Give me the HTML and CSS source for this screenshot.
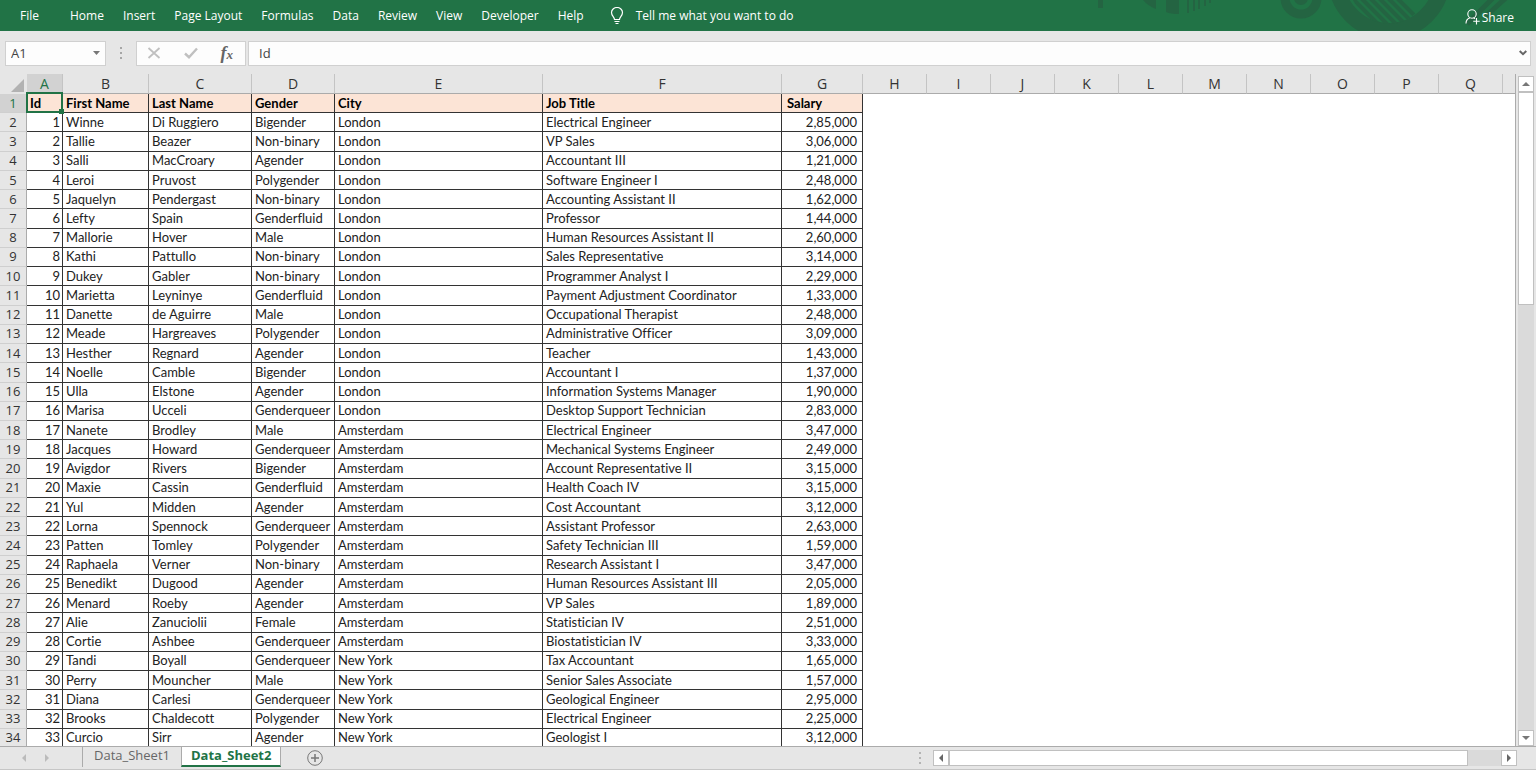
FILE: index.html
```html
<!DOCTYPE html>
<html lang="en">
<head>
    <meta charset="UTF-8">
    <meta name="viewport" content="width=device-width, initial-scale=1.0">
    <title>Data_Sheet2</title>
    <link rel="stylesheet" href="styles.css">
</head>
<body>
    <!-- Ribbon -->
    <header class="ribbon">
        <svg class="ribbon-art" width="438" height="31" viewBox="1098 0 438 31" aria-hidden="true">
            <defs>
                <clipPath id="disc"><circle cx="1389" cy="-15" r="39"/></clipPath>
            </defs>
            <g fill="#246442">
                <rect x="1098" width="5" height="8"/>
                <path d="M1143 0h13v9q-8-3-13-9zM1166 0h13v14q-8 0-13-2z"/>
                <path d="M1187 0h2v13h-2zM1193 0h2v11h-2zM1198 0h2v9h-2zM1204 0h2v6h-2zM1209 0h2v3h-2z"/>
                <circle cx="1301" cy="-2" r="7"/>
            </g>
            <g fill="none" stroke="#246442">
                <circle cx="1301" cy="-2" r="16" stroke-width="9"/>
                <circle cx="1389" cy="-22" r="53" stroke-width="16"/>
                <path clip-path="url(#disc)" stroke-width="4" d="M1334-20l60 60M1343-20l60 60M1352-20l60 60M1361-20l60 60M1370-20l60 60M1379-20l60 60"/>
                <path stroke-width="5" d="M1495-4l-28 28M1508-4l-22 20"/>
            </g>
        </svg>
        <nav class="menu">
            <a href="#" class="file">File</a>
            <a href="#">Home</a>
            <a href="#">Insert</a>
            <a href="#">Page Layout</a>
            <a href="#">Formulas</a>
            <a href="#">Data</a>
            <a href="#">Review</a>
            <a href="#">View</a>
            <a href="#">Developer</a>
            <a href="#">Help</a>
        </nav>
        <button class="tell-me">
            <svg width="14" height="18" viewBox="0 0 14 18" fill="none" stroke="#fff" stroke-width="1.2">
                <path d="M4.5 12.5c0-2.5-3-3.5-3-7a5.5 5 0 0 1 11 0c0 3.5-3 4.500-3 7z"/>
                <path d="M4.5 14.5h5M5.5 16.5h3"/>
            </svg>
            Tell me what you want to do
        </button>
        <button class="share">
            <svg width="15" height="16" viewBox="0 0 15 16" fill="none" stroke="#fff" stroke-width="1.1">
                <circle cx="7" cy="5" r="4.2"/>
                <path d="M1 14.5c0-3 1.5-5 4-5.8M8.5 8.8l1.5 1M11.5 9v6.500M8.2 12.200h6.500"/>
            </svg>
            Share
        </button>
    </header>

    <!-- Formula bar -->
    <div class="formula-bar">
        <div class="name-box">
            <input type="text" value="A1" aria-label="Name box">
            <button aria-label="Show names">
                <svg width="7" height="4" viewBox="0 0 7 4"><path d="M0 0h7L3.5 4z" fill="#777"/></svg>
            </button>
        </div>
        <svg class="dots" width="3" height="12" viewBox="0 0 3 12" fill="#a6a6a6"><path d="M0 0h2v2H0zM0 5h2v2H0zM0 10h2v2H0z"/></svg>
        <div class="formula-buttons">
            <button aria-label="Cancel">
                <svg width="14" height="12" viewBox="0 0 14 12" stroke="#c0c0c0" stroke-width="1.8"><path d="M1.5 1l11 10M12.5 1l-11 10"/></svg>
            </button>
            <button aria-label="Enter">
                <svg width="14" height="12" viewBox="0 0 14 12" fill="none" stroke="#c0c0c0" stroke-width="2.4"><path d="M1 6.5l4 3.7L13 1.5"/></svg>
            </button>
            <button class="fx" aria-label="Insert function"><i>f</i><i class="x">x</i></button>
        </div>
        <div class="formula">
            <input type="text" value="Id" aria-label="Formula">
            <button aria-label="Expand formula bar">
                <svg width="8" height="6" viewBox="0 0 8 6" fill="none" stroke="#666" stroke-width="2"><path d="M.7 1L4 4.2 7.3 1"/></svg>
            </button>
        </div>
    </div>

    <!-- Worksheet -->
    <main class="workspace">
        <div class="sheet">
            <table>
                <colgroup>
                    <col class="c-num"><col class="c-a"><col class="c-b"><col class="c-c"><col class="c-d"><col class="c-e"><col class="c-f"><col class="c-g">
                    <col class="c-std" span="10"><col>
                </colgroup>
                <thead>
                    <tr id="letters"></tr>
                </thead>
                <tbody id="rows"></tbody>
            </table>
        </div>
        <div class="scroll-v">
            <button aria-label="Scroll up"><svg width="8" height="4" viewBox="0 0 8 4"><path d="M0 4h8L4 0z" fill="#777"/></svg></button>
            <div class="track"><div class="thumb"></div></div>
            <button aria-label="Scroll down"><svg width="8" height="4" viewBox="0 0 8 4"><path d="M0 0h8L4 4z" fill="#777"/></svg></button>
        </div>
    </main>

    <!-- Sheet tabs -->
    <footer class="bottom">
        <div class="tab-arrows">
            <button aria-label="Previous sheet"><svg width="4" height="8" viewBox="0 0 4 8"><path d="M4 0v8L0 4z" fill="#bbb"/></svg></button>
            <button aria-label="Next sheet"><svg width="4" height="8" viewBox="0 0 4 8"><path d="M0 0v8l4-4z" fill="#bbb"/></svg></button>
        </div>
        <button class="tab">Data_Sheet1</button>
        <button class="tab active">Data_Sheet2</button>
        <button class="add-sheet" aria-label="New sheet">
            <svg width="16" height="16" viewBox="0 0 16 16" fill="none" stroke="#777"><circle cx="8" cy="8" r="7.3"/><path stroke-width="1.5" d="M8 4v8M4 8h8"/></svg>
        </button>
        <svg class="dots" width="3" height="12" viewBox="0 0 3 12" fill="#b4b4b4"><path d="M0 0h2v2H0zM0 5h2v2H0zM0 10h2v2H0z"/></svg>
        <div class="scroll-h">
            <button aria-label="Scroll left"><svg width="4" height="8" viewBox="0 0 4 8"><path d="M4 0v8L0 4z" fill="#666"/></svg></button>
            <div class="track"><div class="thumb"></div></div>
            <button aria-label="Scroll right"><svg width="4" height="8" viewBox="0 0 4 8"><path d="M0 0v8l4-4z" fill="#666"/></svg></button>
        </div>
    </footer>

    <script>
        const headings = ['Id', 'First Name', 'Last Name', 'Gender', 'City', 'Job Title', 'Salary'];
        const people = [
            ['Winne', 'Di Ruggiero', 'Bigender', 'London', 'Electrical Engineer', '2,85,000'],
            ['Tallie', 'Beazer', 'Non-binary', 'London', 'VP Sales', '3,06,000'],
            ['Salli', 'MacCroary', 'Agender', 'London', 'Accountant III', '1,21,000'],
            ['Leroi', 'Pruvost', 'Polygender', 'London', 'Software Engineer I', '2,48,000'],
            ['Jaquelyn', 'Pendergast', 'Non-binary', 'London', 'Accounting Assistant II', '1,62,000'],
            ['Lefty', 'Spain', 'Genderfluid', 'London', 'Professor', '1,44,000'],
            ['Mallorie', 'Hover', 'Male', 'London', 'Human Resources Assistant II', '2,60,000'],
            ['Kathi', 'Pattullo', 'Non-binary', 'London', 'Sales Representative', '3,14,000'],
            ['Dukey', 'Gabler', 'Non-binary', 'London', 'Programmer Analyst I', '2,29,000'],
            ['Marietta', 'Leyninye', 'Genderfluid', 'London', 'Payment Adjustment Coordinator', '1,33,000'],
            ['Danette', 'de Aguirre', 'Male', 'London', 'Occupational Therapist', '2,48,000'],
            ['Meade', 'Hargreaves', 'Polygender', 'London', 'Administrative Officer', '3,09,000'],
            ['Hesther', 'Regnard', 'Agender', 'London', 'Teacher', '1,43,000'],
            ['Noelle', 'Camble', 'Bigender', 'London', 'Accountant I', '1,37,000'],
            ['Ulla', 'Elstone', 'Agender', 'London', 'Information Systems Manager', '1,90,000'],
            ['Marisa', 'Ucceli', 'Genderqueer', 'London', 'Desktop Support Technician', '2,83,000'],
            ['Nanete', 'Brodley', 'Male', 'Amsterdam', 'Electrical Engineer', '3,47,000'],
            ['Jacques', 'Howard', 'Genderqueer', 'Amsterdam', 'Mechanical Systems Engineer', '2,49,000'],
            ['Avigdor', 'Rivers', 'Bigender', 'Amsterdam', 'Account Representative II', '3,15,000'],
            ['Maxie', 'Cassin', 'Genderfluid', 'Amsterdam', 'Health Coach IV', '3,15,000'],
            ['Yul', 'Midden', 'Agender', 'Amsterdam', 'Cost Accountant', '3,12,000'],
            ['Lorna', 'Spennock', 'Genderqueer', 'Amsterdam', 'Assistant Professor', '2,63,000'],
            ['Patten', 'Tomley', 'Polygender', 'Amsterdam', 'Safety Technician III', '1,59,000'],
            ['Raphaela', 'Verner', 'Non-binary', 'Amsterdam', 'Research Assistant I', '3,47,000'],
            ['Benedikt', 'Dugood', 'Agender', 'Amsterdam', 'Human Resources Assistant III', '2,05,000'],
            ['Menard', 'Roeby', 'Agender', 'Amsterdam', 'VP Sales', '1,89,000'],
            ['Alie', 'Zanuciolii', 'Female', 'Amsterdam', 'Statistician IV', '2,51,000'],
            ['Cortie', 'Ashbee', 'Genderqueer', 'Amsterdam', 'Biostatistician IV', '3,33,000'],
            ['Tandi', 'Boyall', 'Genderqueer', 'New York', 'Tax Accountant', '1,65,000'],
            ['Perry', 'Mouncher', 'Male', 'New York', 'Senior Sales Associate', '1,57,000'],
            ['Diana', 'Carlesi', 'Genderqueer', 'New York', 'Geological Engineer', '2,95,000'],
            ['Brooks', 'Chaldecott', 'Polygender', 'New York', 'Electrical Engineer', '2,25,000'],
            ['Curcio', 'Sirr', 'Agender', 'New York', 'Geologist I', '3,12,000']
        ];

        // column letters
        document.getElementById('letters').innerHTML =
            '<th class="corner"><svg width="13" height="13" viewBox="0 0 13 13"><path d="M13 0v13H0z" fill="#b2b2b2"/></svg></th>' +
            'ABCDEFGHIJKLMNOPQ'.split('').map(letter =>
                `<th scope="col"${letter === 'A' ? ' class="current"' : ''}>${letter}</th>`
            ).join('') + '<th></th>';

        // heading row, then one row for each person
        let html = '<tr class="headings"><th scope="row" class="current">1</th>' +
            headings.map((text, i) => `<td${i === 0 ? ' class="selected"' : ''}>${text}</td>`).join('') + '</tr>';
        people.forEach((person, i) => {
            html += `<tr><th scope="row">${i + 2}</th><td class="number">${i + 1}</td>` +
                person.map((text, j) => `<td${j === 5 ? ' class="salary"' : ''}>${text}</td>`).join('') + '</tr>';
        });
        document.getElementById('rows').innerHTML = html;
    </script>
</body>
</html>
```
FILE: styles.css
```css
* {
    box-sizing: border-box;
}
body {
    margin: 0;
    height: 100vh;
    display: flex;
    flex-direction: column;
    overflow: hidden;
    background-color: #e6e6e6;
    font-family: "Open Sans", "Noto Sans", sans-serif;
    font-size: 12px;
    color: #444;
}
button, input {
    font: inherit;
    color: inherit;
    border: none;
    background: none;
    padding: 0;
}
button {
    display: flex;
    align-items: center;
    justify-content: center;
    cursor: pointer;
}
svg {
    display: block;
    flex: none;
}

/* ribbon */
.ribbon {
    position: relative;
    flex: none;
    display: flex;
    align-items: center;
    height: 31px;
    padding: 0 22px 0 20px;
    background-color: #217346;
    color: #fff;
}
.ribbon-art {
    position: absolute;
    top: 0;
    right: 0;
}
.menu {
    display: flex;
    gap: 19px;
}
.menu a {
    color: #fff;
    text-decoration: none;
}
.menu .file {
    margin-right: 12px;
}
.tell-me {
    gap: 12px;
    margin-left: 26px;
}
.share {
    position: relative;
    gap: 2px;
    margin-left: auto;
    padding-top: 3px;
}

/* formula bar */
.formula-bar {
    flex: none;
    display: flex;
    align-items: center;
    height: 43px;
    padding: 1px 5px 0;
}
.name-box, .formula-buttons, .formula {
    display: flex;
    align-items: center;
    height: 25px;
    background-color: #fdfdfd;
    border: 1px solid #d0d0d0;
}
.name-box {
    width: 101px;
    padding: 0 5px;
}
.name-box input, .formula input {
    flex: 1;
    min-width: 0;
    font-size: 13px;
}
.formula-bar .dots {
    margin: 0 13px 0 14px;
}
.formula-buttons {
    width: 110px;
    justify-content: space-between;
    padding: 0 12px 0 10px;
}
.fx {
    font-family: "Liberation Serif", serif;
    font-size: 18px;
    line-height: 18px;
    font-weight: bold;
    color: #666;
}
.fx .x {
    font-size: 13px;
    padding-top: 4px;
}
.formula {
    flex: 1;
    margin-left: 2px;
    padding: 0 3px 0 10px;
}

/* worksheet */
.workspace {
    flex: 1;
    min-height: 0;
    display: flex;
}
.sheet {
    flex: 1;
    min-width: 0;
    overflow: hidden;
    background-color: #fff;
    border-right: 1px solid #ababab;
}
/* the last row runs a little under the tab bar */
table {
    width: 100%;
    height: calc(100% + 2px);
    table-layout: fixed;
    border-collapse: separate;
    border-spacing: 0;
}
.c-num { width: 27px; }
.c-a { width: 36px; }
.c-b { width: 86px; }
.c-c { width: 103px; }
.c-d { width: 83px; }
.c-e { width: 208px; }
.c-f { width: 239px; }
.c-g { width: 81px; }
.c-std { width: 64px; }
th, td {
    padding: 0;
    white-space: nowrap;
}
thead th {
    height: 20px;
    background-color: #e6e6e6;
    border-right: 1px solid #c4c4c4;
    border-bottom: 1px solid #ababab;
    font-size: 14px;
    line-height: 18px;
    font-weight: normal;
    color: #333;
}
thead th:last-child {
    border-right: none;
}
thead .corner {
    border-color: #e6e6e6;
}
.corner svg {
    margin: 3px 2px 0 auto;
}
tbody th {
    background-color: #e6e6e6;
    border-right: 1px solid #ababab;
    border-bottom: 1px solid #cfcfcf;
    font-size: 13px;
    line-height: 17px;
    font-weight: normal;
    color: #333;
}
thead .current, tbody .current {
    background-color: #d2d2d2;
    color: #217346;
}
td {
    border-right: 1px solid #333;
    border-bottom: 1px solid #333;
    padding: 0 2px 0 3px;
    font-family: Lato, sans-serif;
    font-size: 13px;
    font-variant-ligatures: none;
    line-height: 17px;
    color: #222;
}
.headings td {
    background-color: #fce4d6;
    font-weight: bold;
    color: #000;
}
.headings td:last-child {
    padding-left: 5px;
}
.number {
    text-align: right;
}
.salary {
    text-align: right;
    padding-right: 5px;
}
.selected {
    position: relative;
}
.selected::before {
    content: "";
    position: absolute;
    inset: -2px -1px -1px -1px;
    border: 2px solid #217346;
}
.selected::after {
    content: "";
    position: absolute;
    right: -2px;
    bottom: -2px;
    width: 5px;
    height: 5px;
    background-color: #217346;
}

/* scroll bars */
.track {
    flex: 1;
    background-color: #dadada;
}
.thumb {
    background-color: #fff;
    border: 1px solid #c0c0c0;
}
.scroll-v {
    flex: none;
    display: flex;
    flex-direction: column;
    width: 16px;
    margin: 2px 2px 0 2px;
}
.scroll-v button, .scroll-h button {
    flex: none;
    width: 16px;
    height: 16px;
    background-color: #fff;
    border: 1px solid #c0c0c0;
}
.scroll-v .thumb {
    height: calc(100% / 3);
}
.scroll-h {
    flex: none;
    display: flex;
    width: 38%;
    margin-right: 19px;
}
.scroll-h .track {
    display: flex;
}
.scroll-h .thumb {
    width: 94%;
}

/* sheet tabs */
.bottom {
    flex: none;
    display: flex;
    align-items: center;
    height: 24px;
    border-top: 1px solid #ababab;
    border-bottom: 1px solid #c6c6c6;
}
.tab-arrows {
    display: flex;
    gap: 19px;
    padding: 0 33px 0 22px;
}
.tab {
    align-self: flex-start;
    height: 20px;
    padding: 0 11px;
    border-left: 1px solid #ababab;
    font-size: 13px;
    line-height: 16px;
    align-items: flex-start;
    color: #666;
}
.tab.active {
    padding: 0 9px;
    background-color: #fff;
    border-right: 1px solid #ababab;
    border-bottom: 2px solid #217346;
    font-weight: bold;
    color: #217346;
}
.add-sheet {
    margin-left: 26px;
}
.bottom .dots {
    margin-left: auto;
    margin-right: 11px;
}
```
